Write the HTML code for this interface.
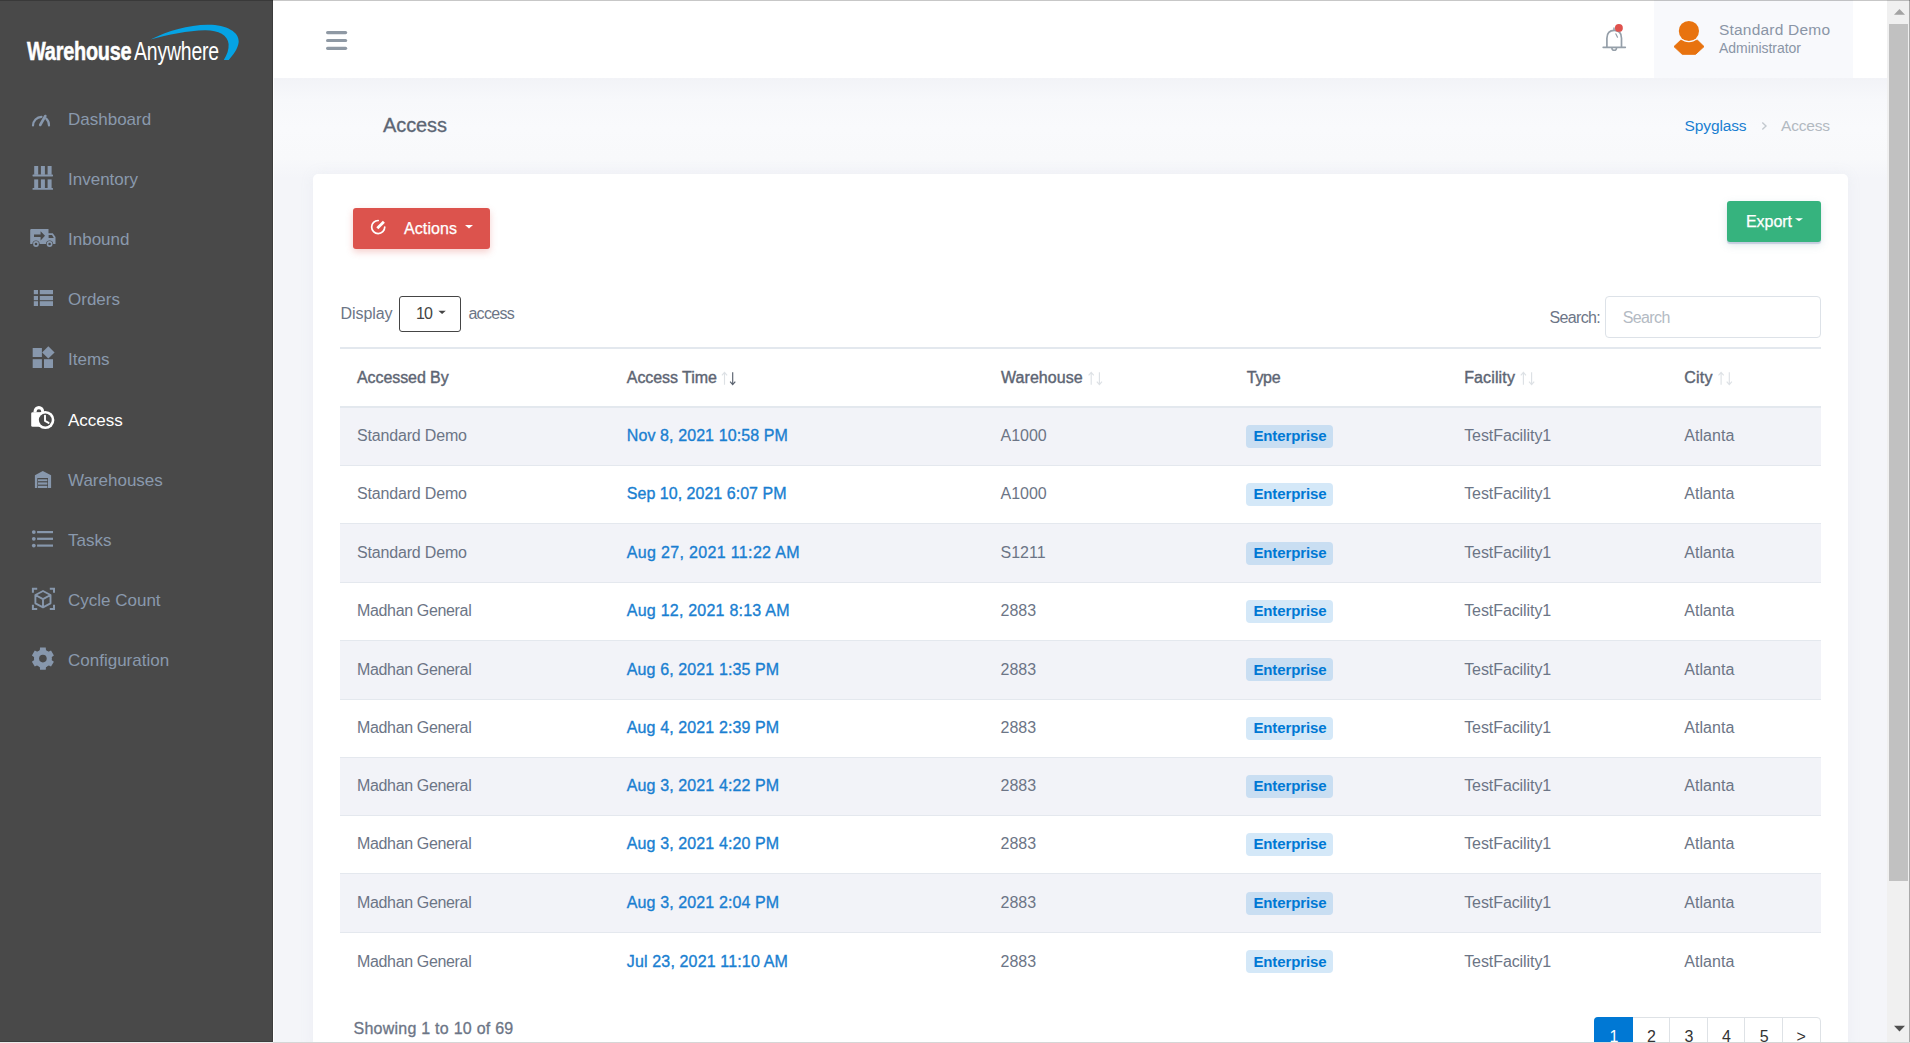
<!DOCTYPE html><html><head><meta charset="utf-8"><title>Access</title><style>*{margin:0;padding:0;box-sizing:border-box}
html,body{width:1910px;height:1043px;overflow:hidden}
body{position:relative;background:#f4f5f9;font-family:"Liberation Sans",sans-serif}
.t{position:absolute;white-space:nowrap}
.a{position:absolute;display:block}
</style></head><body><div class="a" style="left:273px;top:78px;width:1614px;height:965px;background:linear-gradient(180deg,#f2f3f7 0px,#f7f8fb 22px,#f9fafc 50px,#f8f9fb 80px,#f4f5f9 100px,#f4f5f9 100%)"></div>
<div class="a" style="left:273px;top:0px;width:1614px;height:78px;background:#fff"></div>
<div class="a" style="left:273px;top:0px;width:1px;height:1043px;background:#fff"></div>
<div class="a" style="left:1654px;top:0px;width:199px;height:78px;background:#f8f9fc"></div>
<div class="a" style="left:0px;top:0px;width:273px;height:1042px;background:#494949"></div>
<div class="a" style="left:272px;top:0px;width:1px;height:1041px;background:#3d3d3d"></div>
<div class="a" style="left:0px;top:1041px;width:273px;height:1px;background:#3e3e3e"></div>
<div class="t" style="left:27px;top:38px;font-size:26px;line-height:26px;color:#fff;font-weight:bold;transform-origin:0 0;transform:scaleX(0.765);letter-spacing:-0.3px;-webkit-text-stroke:0.5px #fff">Warehouse</div>
<div class="t" style="left:134px;top:38px;font-size:26px;line-height:26px;color:#fff;transform-origin:0 0;transform:scaleX(0.745);letter-spacing:-0.2px">Anywhere</div>
<svg class="a" style="left:145px;top:20px;" width="100" height="45" viewBox="145 20 100 45"><path d="M150.5 39.5 C 168 31, 188 25, 207.8 24.8 C 226 24.6, 239.5 32, 238.7 42 C 238 49, 233 55, 228.8 59.9 L 223.8 59.9 C 227 55, 229 49.5, 228.6 44 C 228 35, 218 30, 205 30.2 C 188 30.5, 168 34.5, 150.5 39.5 Z" fill="#05a3e4"/></svg>
<div class="t" style="left:68.00px;top:110.61px;font-size:17.00px;line-height:17.00px;color:#8a99ad;">Dashboard</div>
<div class="t" style="left:68.00px;top:170.61px;font-size:17.00px;line-height:17.00px;color:#8a99ad;">Inventory</div>
<div class="t" style="left:68.00px;top:230.61px;font-size:17.00px;line-height:17.00px;color:#8a99ad;">Inbound</div>
<div class="t" style="left:68.00px;top:290.61px;font-size:17.00px;line-height:17.00px;color:#8a99ad;">Orders</div>
<div class="t" style="left:68.00px;top:350.61px;font-size:17.00px;line-height:17.00px;color:#8a99ad;">Items</div>
<div class="t" style="left:68.00px;top:411.61px;font-size:17.00px;line-height:17.00px;color:#ffffff;">Access</div>
<div class="t" style="left:68.00px;top:471.61px;font-size:17.00px;line-height:17.00px;color:#8a99ad;">Warehouses</div>
<div class="t" style="left:68.00px;top:531.61px;font-size:17.00px;line-height:17.00px;color:#8a99ad;">Tasks</div>
<div class="t" style="left:68.00px;top:591.61px;font-size:17.00px;line-height:17.00px;color:#8a99ad;">Cycle Count</div>
<div class="t" style="left:68.00px;top:651.61px;font-size:17.00px;line-height:17.00px;color:#8a99ad;">Configuration</div>
<svg class="a" style="left:28px;top:110px;" width="26" height="20" viewBox="28 110 26 20"><path d="M33 125.5 A 8.8 8.8 0 0 1 41.5 116.8" fill="none" stroke="#8797ac" stroke-width="2.2" stroke-linecap="round"/><path d="M46.2 118.6 A 8.8 8.8 0 0 1 49 125.5" fill="none" stroke="#8797ac" stroke-width="2.2" stroke-linecap="round"/><path d="M40.2 125 L45.3 116" stroke="#8797ac" stroke-width="2.6" stroke-linecap="round"/></svg>
<svg class="a" style="left:28px;top:160px;" width="30" height="34" viewBox="28 160 30 34"><rect x="34.2" y="166" width="4" height="8.800000000000011" fill="#8797ac"/><rect x="40.9" y="166" width="4" height="8.800000000000011" fill="#8797ac"/><rect x="47.6" y="166" width="4" height="8.800000000000011" fill="#8797ac"/><rect x="32.5" y="174.6" width="20.5" height="1.8" rx="0.6" fill="#8797ac"/><rect x="34.2" y="179.4" width="4" height="8.799999999999983" fill="#8797ac"/><rect x="40.9" y="179.4" width="4" height="8.799999999999983" fill="#8797ac"/><rect x="47.6" y="179.4" width="4" height="8.799999999999983" fill="#8797ac"/><rect x="32.5" y="188" width="20.5" height="1.8" rx="0.6" fill="#8797ac"/></svg>
<svg class="a" style="left:28px;top:225px;" width="30" height="26" viewBox="28 225 30 26"><path d="M31 229 H48.5 V233.2 H52.8 L55.5 237 V244 H53.2 A3.6 3.6 0 0 0 46 244 H39.6 A3.6 3.6 0 0 0 32.4 244 H30.2 V229.8 Z" fill="#8797ac"/><path d="M48.6 235 H52 L53.8 238 H48.6 Z" fill="#494949"/><path d="M34 234.6 H40.6 V231.2 L45 235.8 L40.6 240.4 V237 H34 Z" fill="#494949"/><circle cx="36" cy="244" r="2.9" fill="#8797ac"/><circle cx="36" cy="244" r="1.3" fill="#494949"/><circle cx="49.6" cy="244" r="2.9" fill="#8797ac"/><circle cx="49.6" cy="244" r="1.3" fill="#494949"/></svg>
<svg class="a" style="left:28px;top:285px;" width="30" height="26" viewBox="28 285 30 26"><rect x="33.8" y="290" width="4.2" height="4.2" fill="#8797ac"/><rect x="39.8" y="290" width="13.2" height="4.2" fill="#8797ac"/><rect x="33.8" y="296" width="4.2" height="4.2" fill="#8797ac"/><rect x="39.8" y="296" width="13.2" height="4.2" fill="#8797ac"/><rect x="33.8" y="301.2" width="4.2" height="4.8" fill="#8797ac"/><rect x="39.8" y="301.2" width="13.2" height="4.8" fill="#8797ac"/></svg>
<svg class="a" style="left:28px;top:342px;" width="30" height="30" viewBox="28 342 30 30"><rect x="32.7" y="348" width="9.2" height="9" fill="#8797ac"/><rect x="32.7" y="359.2" width="9.2" height="8.8" fill="#8797ac"/><rect x="44" y="359.2" width="9" height="8.8" fill="#8797ac"/><path d="M48.3 346.2 L54.6 352.4 L48.3 358.6 L42.1 352.4 Z" fill="#8797ac"/></svg>
<svg class="a" style="left:28px;top:403px;" width="30" height="30" viewBox="28 403 30 30"><path d="M33.6 412.6 V411.3 A5.25 5.25 0 0 1 44.1 411.3 V412.6 Z" fill="#fff"/><path d="M36.6 412.2 V411.6 A2.3 2.3 0 0 1 41.2 411.6 V412.2 Z" fill="#494949"/><rect x="31.2" y="412.3" width="14.5" height="14.5" rx="1.4" fill="#fff"/><circle cx="45.3" cy="420" r="9.1" fill="#fff"/><circle cx="45.3" cy="420" r="6.45" fill="#494949"/><path d="M45 415.6 V420.9 L48.6 422.9" fill="none" stroke="#fff" stroke-width="1.9" stroke-linecap="round" stroke-linejoin="round"/></svg>
<svg class="a" style="left:28px;top:465px;" width="30" height="28" viewBox="28 465 30 28"><path d="M34.9 475.2 L42.8 471 L51.1 475.2 V488 H48 V478 H37.3 V488 H34.9 Z" fill="#8797ac"/><rect x="38" y="479.3" width="9.3" height="1.9" fill="#8797ac"/><rect x="38" y="482.4" width="9.3" height="2.2" fill="#8797ac"/><rect x="38" y="485.8" width="9.3" height="2.2" fill="#8797ac"/></svg>
<svg class="a" style="left:28px;top:525px;" width="30" height="26" viewBox="28 525 30 26"><circle cx="33.8" cy="532.1" r="1.9" fill="#8797ac"/><rect x="37.1" y="531.0" width="15.9" height="2.2" fill="#8797ac"/><circle cx="33.8" cy="538.8" r="1.9" fill="#8797ac"/><rect x="37.1" y="537.6999999999999" width="15.9" height="2.2" fill="#8797ac"/><circle cx="33.8" cy="545.6" r="1.9" fill="#8797ac"/><rect x="37.1" y="544.5" width="15.9" height="2.2" fill="#8797ac"/></svg>
<svg class="a" style="left:28px;top:584px;" width="30" height="30" viewBox="28 584 30 30"><path d="M32.9 592.8 V588.7 H37.2 M49.8 588.7 H54 V592.8 M32.9 604.8 V609 H37.2 M49.8 609 H54 V604.8" fill="none" stroke="#8797ac" stroke-width="2"/><path d="M43 591 L50.5 595 V603.3 L43 607.4 L35.4 603.3 V595 Z M35.4 595 L43 599.2 L50.5 595 M43 599.2 V607.4" fill="none" stroke="#8797ac" stroke-width="1.9" stroke-linejoin="round"/></svg>
<svg class="a" style="left:28px;top:644px;" width="30" height="30" viewBox="28 644 30 30"><path d="M39.78 650.48 L40.05 647.56 L45.75 647.56 L46.02 650.48 L48.38 651.84 L51.03 650.61 L53.89 655.55 L51.49 657.24 L51.49 659.96 L53.89 661.65 L51.03 666.59 L48.38 665.36 L46.02 666.72 L45.75 669.64 L40.05 669.64 L39.78 666.72 L37.42 665.36 L34.77 666.59 L31.91 661.65 L34.31 659.96 L34.31 657.24 L31.91 655.55 L34.77 650.61 L37.42 651.84 Z" fill="#8797ac"/><circle cx="42.9" cy="658.6" r="8.9" fill="#8797ac"/><circle cx="42.9" cy="658.6" r="3.8" fill="#494949"/></svg>
<svg class="a" style="left:320px;top:26px;" width="34" height="30" viewBox="320 26 34 30"><rect x="326" y="31" width="21.2" height="3.2" rx="1.6" fill="#8f99a4"/><rect x="326" y="38.9" width="21.2" height="3.2" rx="1.6" fill="#8f99a4"/><rect x="326" y="46.7" width="21.2" height="3.2" rx="1.6" fill="#8f99a4"/></svg>
<svg class="a" style="left:1598px;top:20px;" width="34" height="36" viewBox="1598 20 34 36"><path d="M1606.9 47.2 V38.2 C1606.9 33.2 1609.6 30.4 1614.2 30.4 C1618.8 30.4 1621.5 33.2 1621.5 38.2 V47.2" fill="none" stroke="#959fa9" stroke-width="1.7"/><path d="M1603.2 47.3 H1625.3" fill="none" stroke="#959fa9" stroke-width="1.7" stroke-linecap="round"/><path d="M1614 27.6 V30.5" fill="none" stroke="#959fa9" stroke-width="1.5"/><path d="M1611.9 48 A2.3 2.3 0 0 0 1616.5 48" fill="none" stroke="#959fa9" stroke-width="1.6"/><path d="M1615.9 33.9 L1617.5 37.2" fill="none" stroke="#959fa9" stroke-width="1.2" stroke-linecap="round"/><circle cx="1618.9" cy="27.9" r="3.95" fill="#df524d"/></svg>
<svg class="a" style="left:1668px;top:16px;" width="42" height="44" viewBox="1668 16 42 44"><path d="M1680.6 40.3 L1697.6 40.3 L1704 46.6 L1695.6 54.3 L1682.2 54.3 L1674 46.6 Z" fill="#e8730f" stroke="#e8730f" stroke-width="1" stroke-linejoin="round"/><circle cx="1688.9" cy="31" r="11.3" fill="#f8f9fc"/><circle cx="1688.9" cy="31" r="10.1" fill="#e8730f"/></svg>
<div class="t" style="left:1719.00px;top:22.38px;font-size:15.50px;line-height:15.50px;color:#8a95a6;letter-spacing:0.203px;">Standard Demo</div>
<div class="t" style="left:1719.00px;top:40.65px;font-size:14.00px;line-height:14.00px;color:#8a95a6;letter-spacing:-0.039px;">Administrator</div>
<div class="t" style="left:383.00px;top:115.07px;font-size:20.00px;line-height:20.00px;color:#5d6674;letter-spacing:-0.093px;-webkit-text-stroke:0.3px #5d6674">Access</div>
<div class="t" style="left:1684.60px;top:117.88px;font-size:15.50px;line-height:15.50px;color:#1a7fd1;letter-spacing:-0.128px;">Spyglass</div>
<svg class="a" style="left:1758px;top:118px;" width="12" height="16" viewBox="1758 118 12 16"><path d="M1762.3 122.6 L1766 126.1 L1762.3 129.6" fill="none" stroke="#c3c9cf" stroke-width="1.4"/></svg>
<div class="t" style="left:1781.00px;top:117.88px;font-size:15.50px;line-height:15.50px;color:#b2b9c1;letter-spacing:-0.192px;">Access</div>
<div class="a" style="left:313px;top:174px;width:1535px;height:880px;background:#fff;border-radius:5px;box-shadow:0 0 14px rgba(170,180,200,0.10)"></div>
<div class="a" style="left:353px;top:208px;width:137px;height:41px;background:#dc534d;border-radius:3px;box-shadow:0 3px 7px rgba(220,83,77,0.28)"></div>
<svg class="a" style="left:368px;top:216px;" width="22" height="22" viewBox="368 216 22 22"><path d="M378.2 220.5 A 6.55 6.55 0 1 0 384.75 227.1" fill="none" stroke="#fff" stroke-width="1.7" stroke-linecap="round"/><path d="M377.3 228.3 L383.9 221.7" stroke="#fff" stroke-width="2.8" stroke-linecap="butt"/></svg>
<div class="t" style="left:404.00px;top:220.96px;font-size:16.00px;line-height:16.00px;color:#ffffff;letter-spacing:0.088px;-webkit-text-stroke:0.25px #fff">Actions</div>
<svg class="a" style="left:462px;top:222px;" width="14" height="10" viewBox="462 222 14 10"><path d="M465 225 H473 L469 228.4 Z" fill="#fff"/></svg>
<div class="a" style="left:1727px;top:201px;width:94px;height:41px;background:#36b37e;border-radius:3px;box-shadow:0 2px 1px rgba(150,160,200,0.45),0 3px 9px rgba(110,150,160,0.22)"></div>
<div class="t" style="left:1746.00px;top:213.96px;font-size:16.00px;line-height:16.00px;color:#ffffff;letter-spacing:-0.049px;-webkit-text-stroke:0.25px #fff">Export</div>
<svg class="a" style="left:1792px;top:215px;" width="14" height="10" viewBox="1792 215 14 10"><path d="M1795 218.3 H1803 L1799 221.2 Z" fill="#fff"/></svg>
<div class="t" style="left:340.50px;top:305.76px;font-size:16.00px;line-height:16.00px;color:#6c7586;letter-spacing:-0.077px;">Display</div>
<div class="a" style="left:399px;top:296px;width:62px;height:36px;border:1px solid #454545;border-radius:3px"></div>
<div class="t" style="left:416.00px;top:305.76px;font-size:16.00px;line-height:16.00px;color:#444;letter-spacing:-0.797px;">10</div>
<svg class="a" style="left:435px;top:307px;" width="14" height="10" viewBox="435 307 14 10"><path d="M438.4 310.7 H445.8 L442.1 313.9 Z" fill="#444"/></svg>
<div class="t" style="left:468.40px;top:305.76px;font-size:16.00px;line-height:16.00px;color:#6c7586;letter-spacing:-0.680px;">access</div>
<div class="t" style="left:1549.40px;top:309.96px;font-size:16.00px;line-height:16.00px;color:#6c7586;letter-spacing:-0.640px;">Search:</div>
<div class="a" style="left:1605px;top:296px;width:216px;height:42px;border:1px solid #dde2e8;border-radius:4px"></div>
<div class="t" style="left:1622.80px;top:309.96px;font-size:16.00px;line-height:16.00px;color:#b3bac3;letter-spacing:-0.639px;">Search</div>
<div class="a" style="left:340px;top:347px;width:1481px;height:2px;background:#e3e8ee"></div>
<div class="a" style="left:340px;top:406px;width:1481px;height:2px;background:#e3e8ee"></div>
<div class="t" style="left:357.00px;top:369.76px;font-size:16.00px;line-height:16.00px;color:#5d6573;letter-spacing:-0.079px;-webkit-text-stroke:0.4px #5d6573">Accessed By</div>
<div class="t" style="left:626.80px;top:369.76px;font-size:16.00px;line-height:16.00px;color:#5d6573;letter-spacing:-0.069px;-webkit-text-stroke:0.4px #5d6573">Access Time</div>
<svg class="a" style="left:719px;top:368px;" width="20" height="20" viewBox="719 368 20 20"><path d="M724.5 384.8 V372.6 M721.9 375.4 L724.5 372.4 L727.1 375.4" fill="none" stroke="#dde1e5" stroke-width="1.15"/><path d="M732.7 372.2 V384.4 M730.1 381.6 L732.7 384.6 L735.3 381.6" fill="none" stroke="#59616e" stroke-width="1.15"/></svg>
<div class="t" style="left:1001.00px;top:369.76px;font-size:16.00px;line-height:16.00px;color:#5d6573;letter-spacing:0.059px;-webkit-text-stroke:0.4px #5d6573">Warehouse</div>
<svg class="a" style="left:1086px;top:368px;" width="20" height="20" viewBox="1086 368 20 20"><path d="M1091.2 384.8 V372.6 M1088.6 375.4 L1091.2 372.4 L1093.8 375.4" fill="none" stroke="#dde1e5" stroke-width="1.15"/><path d="M1099.4 372.2 V384.4 M1096.8 381.6 L1099.4 384.6 L1102.0 381.6" fill="none" stroke="#dde1e5" stroke-width="1.15"/></svg>
<div class="t" style="left:1246.80px;top:369.76px;font-size:16.00px;line-height:16.00px;color:#5d6573;letter-spacing:-0.296px;-webkit-text-stroke:0.4px #5d6573">Type</div>
<div class="t" style="left:1464.20px;top:369.76px;font-size:16.00px;line-height:16.00px;color:#5d6573;letter-spacing:0.131px;-webkit-text-stroke:0.4px #5d6573">Facility</div>
<svg class="a" style="left:1518px;top:368px;" width="20" height="20" viewBox="1518 368 20 20"><path d="M1523.4 384.8 V372.6 M1520.8 375.4 L1523.4 372.4 L1526.0 375.4" fill="none" stroke="#dde1e5" stroke-width="1.15"/><path d="M1531.6 372.2 V384.4 M1529.0 381.6 L1531.6 384.6 L1534.2 381.6" fill="none" stroke="#dde1e5" stroke-width="1.15"/></svg>
<div class="t" style="left:1684.20px;top:369.76px;font-size:16.00px;line-height:16.00px;color:#5d6573;letter-spacing:0.282px;-webkit-text-stroke:0.4px #5d6573">City</div>
<svg class="a" style="left:1716px;top:368px;" width="20" height="20" viewBox="1716 368 20 20"><path d="M1721.1 384.8 V372.6 M1718.5 375.4 L1721.1 372.4 L1723.7 375.4" fill="none" stroke="#dde1e5" stroke-width="1.15"/><path d="M1729.3 372.2 V384.4 M1726.7 381.6 L1729.3 384.6 L1731.9 381.6" fill="none" stroke="#dde1e5" stroke-width="1.15"/></svg>
<div class="a" style="left:340px;top:408px;width:1481px;height:57px;background:#f2f3f8"></div>
<div class="a" style="left:340px;top:465px;width:1481px;height:1px;background:#e4e8ee"></div>
<div class="t" style="left:357.00px;top:428.36px;font-size:16.00px;line-height:16.00px;color:#6c7586;letter-spacing:-0.172px;">Standard Demo</div>
<div class="t" style="left:626.80px;top:428.36px;font-size:16.00px;line-height:16.00px;color:#1a7fd1;letter-spacing:0.094px;-webkit-text-stroke:0.35px #1a7fd1">Nov 8, 2021 10:58 PM</div>
<div class="t" style="left:1000.50px;top:428.36px;font-size:16.00px;line-height:16.00px;color:#6c7586;">A1000</div>
<div class="a" style="left:1246px;top:425px;width:87px;height:23px;background:rgba(0,120,212,0.17);border-radius:4px"></div>
<div class="t" style="left:1253.40px;top:428.20px;font-size:15.00px;line-height:15.00px;color:#0078d4;font-weight:bold;letter-spacing:-0.111px;">Enterprise</div>
<div class="t" style="left:1464.20px;top:428.36px;font-size:16.00px;line-height:16.00px;color:#6c7586;letter-spacing:-0.085px;">TestFacility1</div>
<div class="t" style="left:1684.20px;top:428.36px;font-size:16.00px;line-height:16.00px;color:#6c7586;letter-spacing:0.081px;">Atlanta</div>
<div class="a" style="left:340px;top:523px;width:1481px;height:1px;background:#e4e8ee"></div>
<div class="t" style="left:357.00px;top:486.36px;font-size:16.00px;line-height:16.00px;color:#6c7586;letter-spacing:-0.172px;">Standard Demo</div>
<div class="t" style="left:626.80px;top:486.36px;font-size:16.00px;line-height:16.00px;color:#1a7fd1;letter-spacing:0.025px;-webkit-text-stroke:0.35px #1a7fd1">Sep 10, 2021 6:07 PM</div>
<div class="t" style="left:1000.50px;top:486.36px;font-size:16.00px;line-height:16.00px;color:#6c7586;">A1000</div>
<div class="a" style="left:1246px;top:483px;width:87px;height:23px;background:rgba(0,120,212,0.17);border-radius:4px"></div>
<div class="t" style="left:1253.40px;top:486.20px;font-size:15.00px;line-height:15.00px;color:#0078d4;font-weight:bold;letter-spacing:-0.111px;">Enterprise</div>
<div class="t" style="left:1464.20px;top:486.36px;font-size:16.00px;line-height:16.00px;color:#6c7586;letter-spacing:-0.085px;">TestFacility1</div>
<div class="t" style="left:1684.20px;top:486.36px;font-size:16.00px;line-height:16.00px;color:#6c7586;letter-spacing:0.081px;">Atlanta</div>
<div class="a" style="left:340px;top:524px;width:1481px;height:58px;background:#f2f3f8"></div>
<div class="a" style="left:340px;top:582px;width:1481px;height:1px;background:#e4e8ee"></div>
<div class="t" style="left:357.00px;top:544.86px;font-size:16.00px;line-height:16.00px;color:#6c7586;letter-spacing:-0.172px;">Standard Demo</div>
<div class="t" style="left:626.80px;top:544.86px;font-size:16.00px;line-height:16.00px;color:#1a7fd1;letter-spacing:0.337px;-webkit-text-stroke:0.35px #1a7fd1">Aug 27, 2021 11:22 AM</div>
<div class="t" style="left:1000.50px;top:544.86px;font-size:16.00px;line-height:16.00px;color:#6c7586;">S1211</div>
<div class="a" style="left:1246px;top:542px;width:87px;height:23px;background:rgba(0,120,212,0.17);border-radius:4px"></div>
<div class="t" style="left:1253.40px;top:544.70px;font-size:15.00px;line-height:15.00px;color:#0078d4;font-weight:bold;letter-spacing:-0.111px;">Enterprise</div>
<div class="t" style="left:1464.20px;top:544.86px;font-size:16.00px;line-height:16.00px;color:#6c7586;letter-spacing:-0.085px;">TestFacility1</div>
<div class="t" style="left:1684.20px;top:544.86px;font-size:16.00px;line-height:16.00px;color:#6c7586;letter-spacing:0.081px;">Atlanta</div>
<div class="a" style="left:340px;top:640px;width:1481px;height:1px;background:#e4e8ee"></div>
<div class="t" style="left:357.00px;top:603.36px;font-size:16.00px;line-height:16.00px;color:#6c7586;letter-spacing:-0.345px;">Madhan General</div>
<div class="t" style="left:626.80px;top:603.36px;font-size:16.00px;line-height:16.00px;color:#1a7fd1;letter-spacing:0.229px;-webkit-text-stroke:0.35px #1a7fd1">Aug 12, 2021 8:13 AM</div>
<div class="t" style="left:1000.50px;top:603.36px;font-size:16.00px;line-height:16.00px;color:#6c7586;">2883</div>
<div class="a" style="left:1246px;top:600px;width:87px;height:23px;background:rgba(0,120,212,0.17);border-radius:4px"></div>
<div class="t" style="left:1253.40px;top:603.20px;font-size:15.00px;line-height:15.00px;color:#0078d4;font-weight:bold;letter-spacing:-0.111px;">Enterprise</div>
<div class="t" style="left:1464.20px;top:603.36px;font-size:16.00px;line-height:16.00px;color:#6c7586;letter-spacing:-0.085px;">TestFacility1</div>
<div class="t" style="left:1684.20px;top:603.36px;font-size:16.00px;line-height:16.00px;color:#6c7586;letter-spacing:0.081px;">Atlanta</div>
<div class="a" style="left:340px;top:641px;width:1481px;height:58px;background:#f2f3f8"></div>
<div class="a" style="left:340px;top:699px;width:1481px;height:1px;background:#e4e8ee"></div>
<div class="t" style="left:357.00px;top:661.86px;font-size:16.00px;line-height:16.00px;color:#6c7586;letter-spacing:-0.345px;">Madhan General</div>
<div class="t" style="left:626.80px;top:661.86px;font-size:16.00px;line-height:16.00px;color:#1a7fd1;letter-spacing:0.115px;-webkit-text-stroke:0.35px #1a7fd1">Aug 6, 2021 1:35 PM</div>
<div class="t" style="left:1000.50px;top:661.86px;font-size:16.00px;line-height:16.00px;color:#6c7586;">2883</div>
<div class="a" style="left:1246px;top:658px;width:87px;height:23px;background:rgba(0,120,212,0.17);border-radius:4px"></div>
<div class="t" style="left:1253.40px;top:661.70px;font-size:15.00px;line-height:15.00px;color:#0078d4;font-weight:bold;letter-spacing:-0.111px;">Enterprise</div>
<div class="t" style="left:1464.20px;top:661.86px;font-size:16.00px;line-height:16.00px;color:#6c7586;letter-spacing:-0.085px;">TestFacility1</div>
<div class="t" style="left:1684.20px;top:661.86px;font-size:16.00px;line-height:16.00px;color:#6c7586;letter-spacing:0.081px;">Atlanta</div>
<div class="a" style="left:340px;top:757px;width:1481px;height:1px;background:#e4e8ee"></div>
<div class="t" style="left:357.00px;top:720.36px;font-size:16.00px;line-height:16.00px;color:#6c7586;letter-spacing:-0.345px;">Madhan General</div>
<div class="t" style="left:626.80px;top:720.36px;font-size:16.00px;line-height:16.00px;color:#1a7fd1;letter-spacing:0.115px;-webkit-text-stroke:0.35px #1a7fd1">Aug 4, 2021 2:39 PM</div>
<div class="t" style="left:1000.50px;top:720.36px;font-size:16.00px;line-height:16.00px;color:#6c7586;">2883</div>
<div class="a" style="left:1246px;top:717px;width:87px;height:23px;background:rgba(0,120,212,0.17);border-radius:4px"></div>
<div class="t" style="left:1253.40px;top:720.20px;font-size:15.00px;line-height:15.00px;color:#0078d4;font-weight:bold;letter-spacing:-0.111px;">Enterprise</div>
<div class="t" style="left:1464.20px;top:720.36px;font-size:16.00px;line-height:16.00px;color:#6c7586;letter-spacing:-0.085px;">TestFacility1</div>
<div class="t" style="left:1684.20px;top:720.36px;font-size:16.00px;line-height:16.00px;color:#6c7586;letter-spacing:0.081px;">Atlanta</div>
<div class="a" style="left:340px;top:758px;width:1481px;height:57px;background:#f2f3f8"></div>
<div class="a" style="left:340px;top:815px;width:1481px;height:1px;background:#e4e8ee"></div>
<div class="t" style="left:357.00px;top:778.36px;font-size:16.00px;line-height:16.00px;color:#6c7586;letter-spacing:-0.345px;">Madhan General</div>
<div class="t" style="left:626.80px;top:778.36px;font-size:16.00px;line-height:16.00px;color:#1a7fd1;letter-spacing:0.115px;-webkit-text-stroke:0.35px #1a7fd1">Aug 3, 2021 4:22 PM</div>
<div class="t" style="left:1000.50px;top:778.36px;font-size:16.00px;line-height:16.00px;color:#6c7586;">2883</div>
<div class="a" style="left:1246px;top:775px;width:87px;height:23px;background:rgba(0,120,212,0.17);border-radius:4px"></div>
<div class="t" style="left:1253.40px;top:778.20px;font-size:15.00px;line-height:15.00px;color:#0078d4;font-weight:bold;letter-spacing:-0.111px;">Enterprise</div>
<div class="t" style="left:1464.20px;top:778.36px;font-size:16.00px;line-height:16.00px;color:#6c7586;letter-spacing:-0.085px;">TestFacility1</div>
<div class="t" style="left:1684.20px;top:778.36px;font-size:16.00px;line-height:16.00px;color:#6c7586;letter-spacing:0.081px;">Atlanta</div>
<div class="a" style="left:340px;top:873px;width:1481px;height:1px;background:#e4e8ee"></div>
<div class="t" style="left:357.00px;top:836.36px;font-size:16.00px;line-height:16.00px;color:#6c7586;letter-spacing:-0.345px;">Madhan General</div>
<div class="t" style="left:626.80px;top:836.36px;font-size:16.00px;line-height:16.00px;color:#1a7fd1;letter-spacing:0.115px;-webkit-text-stroke:0.35px #1a7fd1">Aug 3, 2021 4:20 PM</div>
<div class="t" style="left:1000.50px;top:836.36px;font-size:16.00px;line-height:16.00px;color:#6c7586;">2883</div>
<div class="a" style="left:1246px;top:833px;width:87px;height:23px;background:rgba(0,120,212,0.17);border-radius:4px"></div>
<div class="t" style="left:1253.40px;top:836.20px;font-size:15.00px;line-height:15.00px;color:#0078d4;font-weight:bold;letter-spacing:-0.111px;">Enterprise</div>
<div class="t" style="left:1464.20px;top:836.36px;font-size:16.00px;line-height:16.00px;color:#6c7586;letter-spacing:-0.085px;">TestFacility1</div>
<div class="t" style="left:1684.20px;top:836.36px;font-size:16.00px;line-height:16.00px;color:#6c7586;letter-spacing:0.081px;">Atlanta</div>
<div class="a" style="left:340px;top:874px;width:1481px;height:58px;background:#f2f3f8"></div>
<div class="a" style="left:340px;top:932px;width:1481px;height:1px;background:#e4e8ee"></div>
<div class="t" style="left:357.00px;top:894.86px;font-size:16.00px;line-height:16.00px;color:#6c7586;letter-spacing:-0.345px;">Madhan General</div>
<div class="t" style="left:626.80px;top:894.86px;font-size:16.00px;line-height:16.00px;color:#1a7fd1;letter-spacing:0.115px;-webkit-text-stroke:0.35px #1a7fd1">Aug 3, 2021 2:04 PM</div>
<div class="t" style="left:1000.50px;top:894.86px;font-size:16.00px;line-height:16.00px;color:#6c7586;">2883</div>
<div class="a" style="left:1246px;top:892px;width:87px;height:23px;background:rgba(0,120,212,0.17);border-radius:4px"></div>
<div class="t" style="left:1253.40px;top:894.70px;font-size:15.00px;line-height:15.00px;color:#0078d4;font-weight:bold;letter-spacing:-0.111px;">Enterprise</div>
<div class="t" style="left:1464.20px;top:894.86px;font-size:16.00px;line-height:16.00px;color:#6c7586;letter-spacing:-0.085px;">TestFacility1</div>
<div class="t" style="left:1684.20px;top:894.86px;font-size:16.00px;line-height:16.00px;color:#6c7586;letter-spacing:0.081px;">Atlanta</div>
<div class="t" style="left:357.00px;top:953.86px;font-size:16.00px;line-height:16.00px;color:#6c7586;letter-spacing:-0.345px;">Madhan General</div>
<div class="t" style="left:626.80px;top:953.86px;font-size:16.00px;line-height:16.00px;color:#1a7fd1;letter-spacing:0.148px;-webkit-text-stroke:0.35px #1a7fd1">Jul 23, 2021 11:10 AM</div>
<div class="t" style="left:1000.50px;top:953.86px;font-size:16.00px;line-height:16.00px;color:#6c7586;">2883</div>
<div class="a" style="left:1246px;top:950px;width:87px;height:23px;background:rgba(0,120,212,0.17);border-radius:4px"></div>
<div class="t" style="left:1253.40px;top:953.70px;font-size:15.00px;line-height:15.00px;color:#0078d4;font-weight:bold;letter-spacing:-0.111px;">Enterprise</div>
<div class="t" style="left:1464.20px;top:953.86px;font-size:16.00px;line-height:16.00px;color:#6c7586;letter-spacing:-0.085px;">TestFacility1</div>
<div class="t" style="left:1684.20px;top:953.86px;font-size:16.00px;line-height:16.00px;color:#6c7586;letter-spacing:0.081px;">Atlanta</div>
<div class="t" style="left:353.50px;top:1021.06px;font-size:16.00px;line-height:16.00px;color:#6c7586;letter-spacing:0.246px;-webkit-text-stroke:0.3px #6c7586">Showing 1 to 10 of 69</div>
<div class="a" style="left:1594px;top:1017px;width:227px;height:40px;border:1px solid #dee2e6;border-radius:4px;background:#fff"></div>
<div class="a" style="left:1594px;top:1017px;width:39px;height:40px;background:#0078d4;border-radius:4px 0 0 0"></div>
<div class="a" style="left:1669px;top:1017px;width:1px;height:30px;background:#dee2e6"></div>
<div class="a" style="left:1707px;top:1017px;width:1px;height:30px;background:#dee2e6"></div>
<div class="a" style="left:1744px;top:1017px;width:1px;height:30px;background:#dee2e6"></div>
<div class="a" style="left:1782px;top:1017px;width:1px;height:30px;background:#dee2e6"></div>
<div class="t" style="left:1609.50px;top:1029.46px;font-size:16.00px;line-height:16.00px;color:#fff;">1</div>
<div class="t" style="left:1647.00px;top:1029.46px;font-size:16.00px;line-height:16.00px;color:#333;">2</div>
<div class="t" style="left:1684.50px;top:1029.46px;font-size:16.00px;line-height:16.00px;color:#333;">3</div>
<div class="t" style="left:1722.00px;top:1029.46px;font-size:16.00px;line-height:16.00px;color:#333;">4</div>
<div class="t" style="left:1759.80px;top:1029.46px;font-size:16.00px;line-height:16.00px;color:#333;">5</div>
<div class="t" style="left:1796.50px;top:1029.46px;font-size:16.00px;line-height:16.00px;color:#333;">></div>
<div class="a" style="left:1887px;top:0px;width:23px;height:1043px;background:#f0f0f0"></div>
<div class="a" style="left:1889px;top:24px;width:19px;height:857px;background:#c1c1c1"></div>
<svg class="a" style="left:1890px;top:5px;" width="18" height="14" viewBox="1890 5 18 14"><path d="M1894 14.8 L1899.5 9 L1905 14.8 Z" fill="#a3a3a3"/></svg>
<svg class="a" style="left:1890px;top:1020px;" width="18" height="16" viewBox="1890 1020 18 16"><path d="M1894 1025.8 L1905 1025.8 L1899.5 1031.6 Z" fill="#505050"/></svg>
<div class="a" style="left:1909px;top:0px;width:1px;height:1043px;background:#a9a9a9"></div>
<div class="a" style="left:0px;top:0px;width:1910px;height:1px;background:rgba(0,0,0,0.22)"></div>
<div class="a" style="left:0px;top:1042px;width:273px;height:1px;background:#ebebeb"></div>
<div class="a" style="left:273px;top:1042px;width:1637px;height:1px;background:#d6d6d6"></div></body></html>
